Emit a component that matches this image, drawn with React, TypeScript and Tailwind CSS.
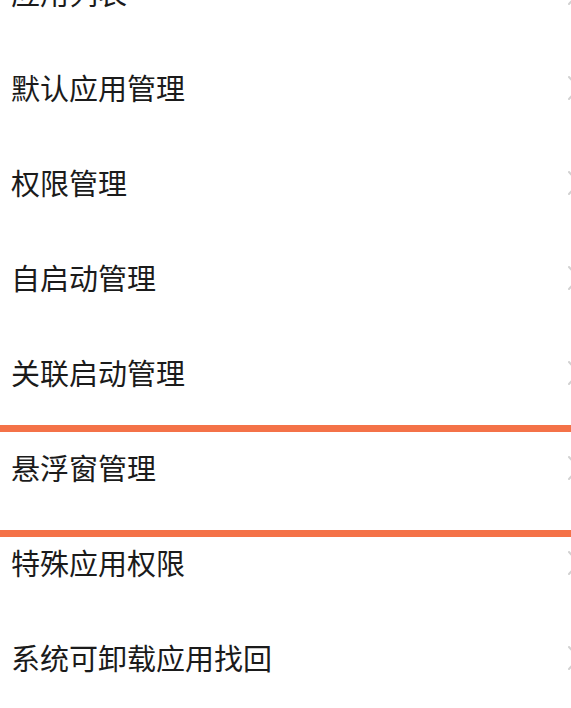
import React from 'react';

const items = [
  '应用列表',
  '默认应用管理',
  '权限管理',
  '自启动管理',
  '关联启动管理',
  '悬浮窗管理',
  '特殊应用权限',
  '系统可卸载应用找回',
];

function Chevron() {
  return (
    <svg width="12" height="24" viewBox="0 0 12 24" className="shrink-0 -mr-[9px]" fill="none">
      <path d="M1 1 L11 12 L1 23" stroke="#d2d2d2" strokeWidth="2" strokeLinecap="round" strokeLinejoin="round" />
    </svg>
  );
}

export default function App() {
  return (
    <div
      className="relative h-[708px] w-full overflow-hidden bg-white"
      style={{ fontFamily: "'Noto Sans CJK SC', 'Noto Sans', sans-serif" }}
    >
      <div className="-mt-[55px] flex flex-col">
        {items.map(label => (
          <div key={label} className="flex h-[95px] items-center justify-between pl-[11px]">
            <span className="text-[29px] leading-none text-[#1b1b1b]">{label}</span>
            <Chevron />
          </div>
        ))}
      </div>

      {/* highlight annotation */}
      <div className="pointer-events-none absolute left-0 right-0 top-[425px] h-[112px] border-y-[7px] border-[#f47248]" />
    </div>
  );
}
